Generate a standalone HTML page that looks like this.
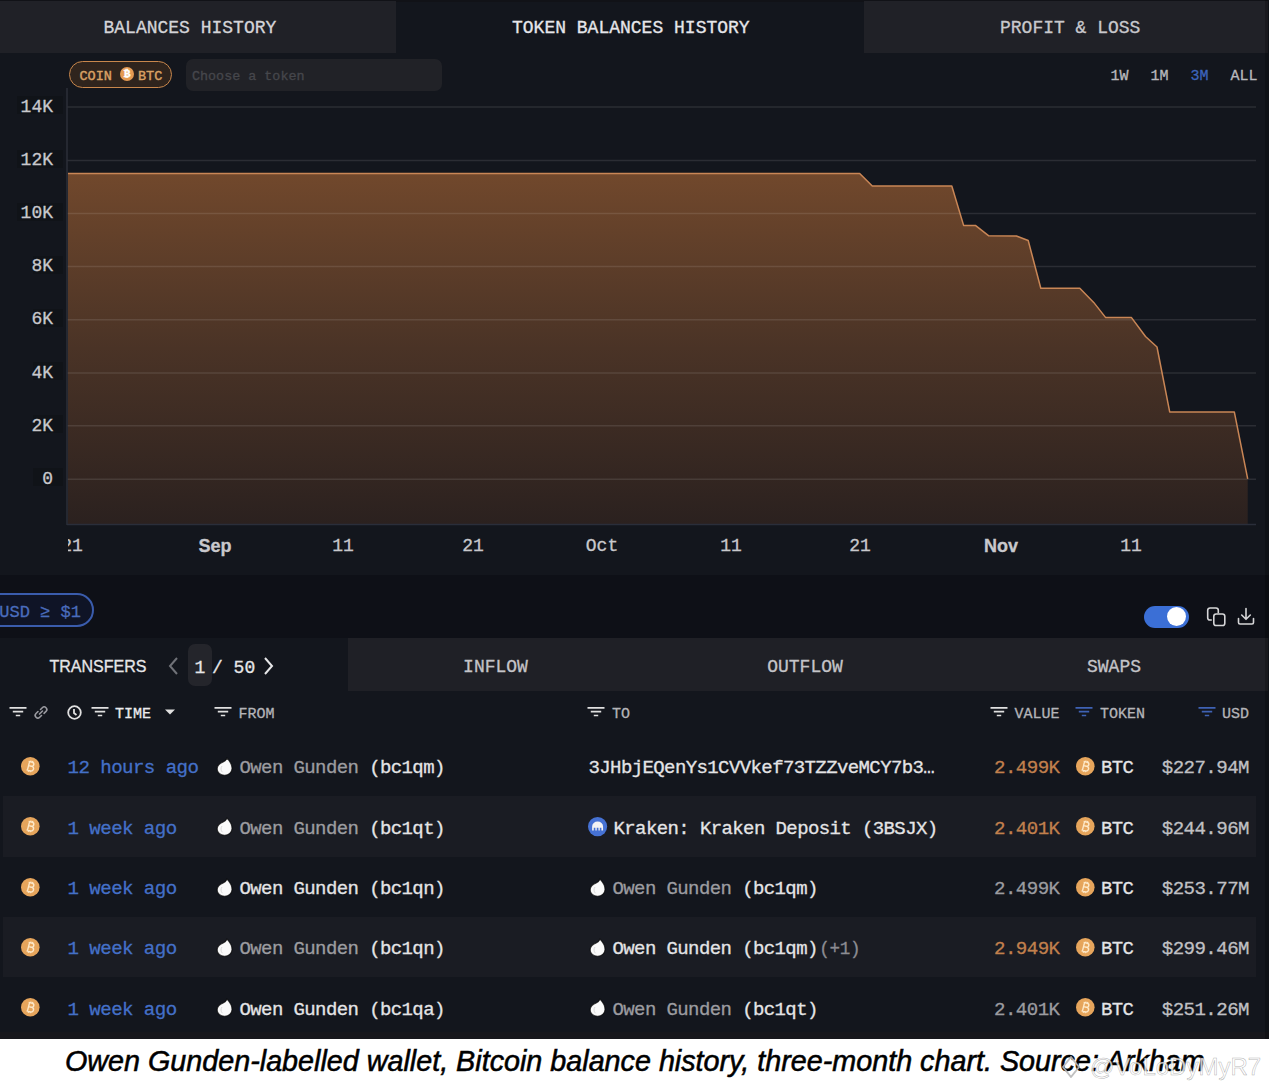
<!DOCTYPE html>
<html><head><meta charset="utf-8">
<style>
*{margin:0;padding:0;box-sizing:border-box}
html,body{width:1270px;height:1092px;overflow:hidden;background:#fff}
body{position:relative;font-family:"Liberation Mono",monospace}
.a{position:absolute;white-space:nowrap}
#ui{position:absolute;left:0;top:0;width:1269px;height:1039px;background:#13161d;overflow:hidden}
.m{font-family:"Liberation Mono",monospace;-webkit-text-stroke:0.3px currentColor}
.s{-webkit-text-stroke:0.3px currentColor}
.s{font-family:"Liberation Sans",sans-serif}
.t18{font-size:18px;line-height:20px}
.r18{font-size:18.1px;line-height:20px}
.q18{font-size:19px;letter-spacing:-0.6px;line-height:20px}
.q18b{font-size:19.1px;letter-spacing:-0.55px;line-height:20px}
.t15{font-size:15px;line-height:17px}
svg{position:absolute;overflow:visible}
</style></head><body>
<div id="ui">

<div class="a" style="left:0;top:0;width:1268px;height:2px;background:#111217"></div>
<div class="a" style="left:0;top:1px;width:396px;height:52px;background:#202127"></div>
<div class="a" style="left:864px;top:1px;width:404px;height:52px;background:#202127"></div>
<div class="a m t18" style="left:103.5px;top:18px;color:#d4d4d8">BALANCES HISTORY</div>
<div class="a m t18" style="left:512px;top:18px;color:#e6e6ea">TOKEN BALANCES HISTORY</div>
<div class="a m t18" style="left:1000px;top:18px;color:#c8c8cc">PROFIT &amp; LOSS</div>
<div class="a" style="left:69px;top:61px;width:103px;height:27px;border:1.6px solid #c8874c;border-radius:14px;background:#2f241d"></div>
<div class="a m" style="left:79.5px;top:68.5px;font-size:13.5px;line-height:16px;color:#d9a064;-webkit-text-stroke:0.45px #d9a064">COIN</div>
<div class="a" style="left:120px;top:67px;width:14px;height:14px;border-radius:7px;background:#e49a52"></div>
<div class="a m" style="left:122px;top:67px;font-size:11px;line-height:14px;color:#fff;font-weight:bold;width:10px;text-align:center">&#x20BF;</div>
<div class="a m" style="left:138px;top:68.5px;font-size:13.5px;line-height:16px;color:#d9a064;-webkit-text-stroke:0.45px #d9a064">BTC</div>
<div class="a" style="left:186px;top:59px;width:256px;height:31.5px;border-radius:7px;background:#212227"></div>
<div class="a m" style="left:192px;top:68.5px;font-size:13.4px;line-height:15px;color:#46474c">Choose a token</div>
<div class="a m" style="left:1110.5px;top:67.5px;font-size:15px;line-height:17px;color:#b8b8bc">1W</div>
<div class="a m" style="left:1150.5px;top:67.5px;font-size:15px;line-height:17px;color:#b8b8bc">1M</div>
<div class="a m" style="left:1190.5px;top:67.5px;font-size:15px;line-height:17px;color:#3d64bc">3M</div>
<div class="a m" style="left:1230.5px;top:67.5px;font-size:15px;line-height:17px;color:#b8b8bc">ALL</div>
<svg style="left:0;top:0" width="1268" height="574" viewBox="0 0 1268 574">
<defs><linearGradient id="g" x1="0" y1="173" x2="0" y2="524" gradientUnits="userSpaceOnUse">
<stop offset="0" stop-color="#71482c"/><stop offset="0.5" stop-color="#4a3326"/><stop offset="1" stop-color="#2b211f"/></linearGradient></defs>
<path d="M68,173.5 L859.7,173.5 L872.3,186 L951.8,186 L963.6,225.4 L975.4,225.4 L988.8,235.8 L1016.4,236 L1028.2,240.5 L1040.8,288.2 L1079.8,288.2 L1093.7,302.4 L1105.7,317.6 L1131.5,317.6 L1145.5,336.5 L1157,347 L1169.7,411.9 L1234.3,411.9 L1247.7,478.9 L1247.7,524 L68,524 Z" fill="url(#g)"/>
<line x1="67" y1="107" x2="1256" y2="107" stroke="#ffffff" stroke-opacity="0.1" stroke-width="1.5"/><line x1="67" y1="160.5" x2="1256" y2="160.5" stroke="#ffffff" stroke-opacity="0.1" stroke-width="1.5"/><line x1="67" y1="213.5" x2="1256" y2="213.5" stroke="#ffffff" stroke-opacity="0.1" stroke-width="1.5"/><line x1="67" y1="266.5" x2="1256" y2="266.5" stroke="#ffffff" stroke-opacity="0.1" stroke-width="1.5"/><line x1="67" y1="319.7" x2="1256" y2="319.7" stroke="#ffffff" stroke-opacity="0.1" stroke-width="1.5"/><line x1="67" y1="373" x2="1256" y2="373" stroke="#ffffff" stroke-opacity="0.1" stroke-width="1.5"/><line x1="67" y1="425.8" x2="1256" y2="425.8" stroke="#ffffff" stroke-opacity="0.1" stroke-width="1.5"/><line x1="67" y1="479.3" x2="1256" y2="479.3" stroke="#ffffff" stroke-opacity="0.1" stroke-width="1.5"/><line x1="67" y1="88" x2="67" y2="525" stroke="#2c2f38" stroke-width="1.5"/><line x1="67" y1="524.5" x2="1256" y2="524.5" stroke="#2a2e3a" stroke-width="1.5"/><path d="M68,173.5 L859.7,173.5 L872.3,186 L951.8,186 L963.6,225.4 L975.4,225.4 L988.8,235.8 L1016.4,236 L1028.2,240.5 L1040.8,288.2 L1079.8,288.2 L1093.7,302.4 L1105.7,317.6 L1131.5,317.6 L1145.5,336.5 L1157,347 L1169.7,411.9 L1234.3,411.9 L1247.7,478.9" fill="none" stroke="#c98656" stroke-width="1.5" stroke-linejoin="round"/></svg>
<div class="a" style="left:16.5px;top:96px;width:46.5px;height:18px;background:#101318"></div>
<div class="a m t18" style="right:1216px;top:96.7px;color:#c8c8cc;text-align:right">14K</div>
<div class="a" style="left:16.5px;top:149.5px;width:46.5px;height:18px;background:#101318"></div>
<div class="a m t18" style="right:1216px;top:150.2px;color:#c8c8cc;text-align:right">12K</div>
<div class="a" style="left:16.5px;top:202.5px;width:46.5px;height:18px;background:#101318"></div>
<div class="a m t18" style="right:1216px;top:203.2px;color:#c8c8cc;text-align:right">10K</div>
<div class="a" style="left:33px;top:255.5px;width:30px;height:18px;background:#101318"></div>
<div class="a m t18" style="right:1216px;top:256.2px;color:#c8c8cc;text-align:right">8K</div>
<div class="a" style="left:33px;top:308.7px;width:30px;height:18px;background:#101318"></div>
<div class="a m t18" style="right:1216px;top:309.4px;color:#c8c8cc;text-align:right">6K</div>
<div class="a" style="left:33px;top:362px;width:30px;height:18px;background:#101318"></div>
<div class="a m t18" style="right:1216px;top:362.7px;color:#c8c8cc;text-align:right">4K</div>
<div class="a" style="left:33px;top:414.8px;width:30px;height:18px;background:#101318"></div>
<div class="a m t18" style="right:1216px;top:415.5px;color:#c8c8cc;text-align:right">2K</div>
<div class="a" style="left:33px;top:468.3px;width:30px;height:18px;background:#101318"></div>
<div class="a m t18" style="right:1216px;top:469.0px;color:#c8c8cc;text-align:right">0</div>
<div class="a" style="left:68px;top:525px;width:1200px;height:45px;overflow:hidden">
<div class="a m" style="left:-36px;width:80px;text-align:center;top:10.799999999999955px;font-size:18px;line-height:20px;font-weight:normal;color:#c8c8cc">21</div>
<div class="a s" style="left:107px;width:80px;text-align:center;top:10.799999999999955px;font-size:18px;line-height:20px;font-weight:bold;color:#c8c8cc">Sep</div>
<div class="a m" style="left:235px;width:80px;text-align:center;top:10.799999999999955px;font-size:18px;line-height:20px;font-weight:normal;color:#c8c8cc">11</div>
<div class="a m" style="left:365px;width:80px;text-align:center;top:10.799999999999955px;font-size:18px;line-height:20px;font-weight:normal;color:#c8c8cc">21</div>
<div class="a m" style="left:494px;width:80px;text-align:center;top:10.799999999999955px;font-size:18px;line-height:20px;font-weight:normal;color:#c8c8cc">Oct</div>
<div class="a m" style="left:623px;width:80px;text-align:center;top:10.799999999999955px;font-size:18px;line-height:20px;font-weight:normal;color:#c8c8cc">11</div>
<div class="a m" style="left:752px;width:80px;text-align:center;top:10.799999999999955px;font-size:18px;line-height:20px;font-weight:normal;color:#c8c8cc">21</div>
<div class="a s" style="left:893px;width:80px;text-align:center;top:10.799999999999955px;font-size:18px;line-height:20px;font-weight:bold;color:#c8c8cc">Nov</div>
<div class="a m" style="left:1023px;width:80px;text-align:center;top:10.799999999999955px;font-size:18px;line-height:20px;font-weight:normal;color:#c8c8cc">11</div>
</div>
<div class="a" style="left:0;top:575px;width:1269px;height:63px;background:#0e1017"></div>
<div class="a" style="left:-30px;top:593px;width:124px;height:34px;border:2px solid #3a5cac;border-radius:17px;background:#0f1426"></div>
<div class="a m" style="left:-0.7px;top:603px;font-size:17px;line-height:19px;color:#4a6cbc;-webkit-text-stroke:0.3px #4a6cbc">USD &#x2265; $1</div>
<div class="a" style="left:1144px;top:605.5px;width:44.5px;height:22px;border-radius:11px;background:#3b6fd6"></div>
<div class="a" style="left:1166.5px;top:607px;width:19px;height:19px;border-radius:10px;background:#fff"></div>
<svg style="left:1206px;top:607px" width="22" height="21" viewBox="0 0 22 21">
<path d="M5.8 13 H4 a2.3 2.3 0 0 1 -2.3 -2.3 V3.3 a2.3 2.3 0 0 1 2.3 -2.3 H10 a2.3 2.3 0 0 1 2.3 2.3 V6.2" fill="none" stroke="#d6d6d8" stroke-width="1.6"/>
<rect x="7.8" y="7" width="11" height="11.5" rx="2.3" fill="none" stroke="#d6d6d8" stroke-width="1.6"/></svg>
<svg style="left:1236px;top:607px" width="20" height="19" viewBox="0 0 20 19">
<path d="M10 1.5 V12 M5.7 8 L10 12.3 L14.3 8" fill="none" stroke="#d6d6d8" stroke-width="1.6" stroke-linecap="round" stroke-linejoin="round"/>
<path d="M2.5 11.5 V15.5 a1.5 1.5 0 0 0 1.5 1.5 H16 a1.5 1.5 0 0 0 1.5 -1.5 V11.5" fill="none" stroke="#d6d6d8" stroke-width="1.6" stroke-linecap="round"/></svg>
<div class="a" style="left:0;top:638px;width:348px;height:53px;background:#13161d"></div>
<div class="a" style="left:348px;top:638px;width:920px;height:53px;background:#1f2026"></div>
<div class="a s" style="left:49.5px;top:658.4px;font-size:16px;line-height:18px;color:#e6e6e8">TRANSFERS</div>
<svg style="left:166px;top:656px" width="14" height="20" viewBox="0 0 14 20"><path d="M11 2 L4 10 L11 18" fill="none" stroke="#707278" stroke-width="2"/></svg>
<div class="a" style="left:187.5px;top:644px;width:24.5px;height:42px;border-radius:7px;background:#24252b"></div>
<div class="a m t18" style="left:194.5px;top:657.8px;color:#e6e6e8">1</div>
<div class="a m t18" style="left:212px;top:657.8px;color:#e6e6e8">/ 50</div>
<svg style="left:261px;top:656px" width="14" height="20" viewBox="0 0 14 20"><path d="M4 2 L11 10 L4 18" fill="none" stroke="#e6e6e8" stroke-width="2"/></svg>
<div class="a m t18" style="left:435.5px;width:120px;text-align:center;top:656.8px;color:#c4c4c8">INFLOW</div>
<div class="a m t18" style="left:745px;width:120px;text-align:center;top:656.8px;color:#c4c4c8">OUTFLOW</div>
<div class="a m t18" style="left:1054px;width:120px;text-align:center;top:656.8px;color:#c4c4c8">SWAPS</div>
<svg style="left:9px;top:707px" width="18" height="10" viewBox="0 0 18 10"><path d="M0.5 0.9 H17.5 M3.8 4.6 H14.2 M6.8 8.5 H11.2" stroke="#e0e0e0" stroke-width="1.7"/></svg>
<svg style="left:33px;top:705px" width="16" height="15" viewBox="0 0 16 15"><path d="M6.5 9 L9.5 6 M5 6.5 L3 8.5 a2.6 2.6 0 0 0 3.7 3.7 L8.5 10.5 M7.5 4.5 L9.3 2.7 a2.6 2.6 0 0 1 3.7 3.7 L11 8.3" fill="none" stroke="#9a9aa0" stroke-width="1.6" stroke-linecap="round"/></svg>
<svg style="left:67px;top:704.5px" width="16" height="15" viewBox="0 0 16 15"><circle cx="7.5" cy="7.5" r="6.3" fill="none" stroke="#e0e0e0" stroke-width="1.8"/><path d="M7 4 V8 L9.5 10" fill="none" stroke="#e0e0e0" stroke-width="1.8"/></svg>
<svg style="left:91px;top:707px" width="18" height="10" viewBox="0 0 18 10"><path d="M0.5 0.9 H17.5 M3.8 4.6 H14.2 M6.8 8.5 H11.2" stroke="#e0e0e0" stroke-width="1.7"/></svg>
<div class="a m t15" style="left:115px;top:706px;color:#ececee">TIME</div>
<svg style="left:164px;top:709px" width="12" height="6" viewBox="0 0 12 6"><path d="M1 0.5 H11 L6 5.5 Z" fill="#e0e0e0"/></svg>
<svg style="left:214px;top:707px" width="18" height="10" viewBox="0 0 18 10"><path d="M0.5 0.9 H17.5 M3.8 4.6 H14.2 M6.8 8.5 H11.2" stroke="#e0e0e0" stroke-width="1.7"/></svg>
<div class="a m t15" style="left:238.5px;top:706px;color:#b4b4b8">FROM</div>
<svg style="left:587px;top:707px" width="18" height="10" viewBox="0 0 18 10"><path d="M0.5 0.9 H17.5 M3.8 4.6 H14.2 M6.8 8.5 H11.2" stroke="#e0e0e0" stroke-width="1.7"/></svg>
<div class="a m t15" style="left:612px;top:706px;color:#b4b4b8">TO</div>
<svg style="left:990px;top:707px" width="18" height="10" viewBox="0 0 18 10"><path d="M0.5 0.9 H17.5 M3.8 4.6 H14.2 M6.8 8.5 H11.2" stroke="#e0e0e0" stroke-width="1.7"/></svg>
<div class="a m t15" style="left:1014.5px;top:706px;color:#b4b4b8">VALUE</div>
<svg style="left:1075px;top:707px" width="18" height="10" viewBox="0 0 18 10"><path d="M0.5 0.9 H17.5 M3.8 4.6 H14.2 M6.8 8.5 H11.2" stroke="#3f62b4" stroke-width="1.7"/></svg>
<div class="a m t15" style="left:1100px;top:706px;color:#b4b4b8">TOKEN</div>
<svg style="left:1198px;top:707px" width="18" height="10" viewBox="0 0 18 10"><path d="M0.5 0.9 H17.5 M3.8 4.6 H14.2 M6.8 8.5 H11.2" stroke="#3f62b4" stroke-width="1.7"/></svg>
<div class="a m t15" style="left:1222px;top:706px;color:#b4b4b8">USD</div>
<svg style="left:21.3px;top:756.5999999999999px" width="18.6" height="18.6" viewBox="0 0 20 20"><circle cx="10" cy="10" r="10" fill="#e6a55c"/><g transform="rotate(14 10 10)" fill="none" stroke="#fde8c8" stroke-width="1.5"><path d="M8 5 V15 M9.3 3.8 V5.2 M11.3 3.8 V5.2 M9.3 14.8 V16.2 M11.3 14.8 V16.2 M7 5.3 H11 a2.2 2.2 0 0 1 0 4.4 H8 M8 9.7 H11.6 a2.5 2.5 0 0 1 0 5 H7"/></g></svg>
<div class="a m q18b" style="left:67.5px;top:758.0999999999999px;color:#4470c8">12 hours ago</div>
<svg style="left:216.2px;top:756.4999999999999px" width="17" height="19" viewBox="0 0 17 19"><path d="M11 1.2 C13.8 4.2 16.2 7.5 16 11.6 C15.8 15.6 12.6 18.2 8.6 18.2 C4.4 18.2 1.2 15.6 1.2 12 C1.2 8.4 4.2 6.2 7.2 5 C9 4.2 10.4 3 11 1.2 Z" fill="#fafafa" stroke="#000" stroke-width="1.1" stroke-opacity="0.7"/><path d="M6 9 C4.6 10.8 4.6 13.4 6.4 15.2" fill="none" stroke="#c8c8c8" stroke-width="0.7"/></svg>
<div class="a m q18" style="left:239.5px;top:758.0999999999999px;color:#9c9ca0">Owen Gunden <span style="color:#e4e4e6">(bc1qm)</span></div>
<div class="a m q18" style="left:588.5px;top:758.0999999999999px;color:#e4e4e6">3JHbjEQenYs1CVVkef73TZZveMCY7b3…</div>
<div class="a m q18b" style="right:209.5px;top:758.0999999999999px;color:#c2804d">2.499K</div>
<svg style="left:1075.7px;top:756.5999999999999px" width="18.6" height="18.6" viewBox="0 0 20 20"><circle cx="10" cy="10" r="10" fill="#e6a55c"/><g transform="rotate(14 10 10)" fill="none" stroke="#fde8c8" stroke-width="1.5"><path d="M8 5 V15 M9.3 3.8 V5.2 M11.3 3.8 V5.2 M9.3 14.8 V16.2 M11.3 14.8 V16.2 M7 5.3 H11 a2.2 2.2 0 0 1 0 4.4 H8 M8 9.7 H11.6 a2.5 2.5 0 0 1 0 5 H7"/></g></svg>
<div class="a m q18" style="left:1101px;top:758.0999999999999px;color:#e4e4e6">BTC</div>
<div class="a m q18b" style="right:20px;top:758.0999999999999px;color:#c0c0c4">$227.94M</div>
<div class="a" style="left:3px;top:796.4px;width:1253px;height:60.9px;background:#1a1c23"></div>
<svg style="left:21.3px;top:817.35px" width="18.6" height="18.6" viewBox="0 0 20 20"><circle cx="10" cy="10" r="10" fill="#e6a55c"/><g transform="rotate(14 10 10)" fill="none" stroke="#fde8c8" stroke-width="1.5"><path d="M8 5 V15 M9.3 3.8 V5.2 M11.3 3.8 V5.2 M9.3 14.8 V16.2 M11.3 14.8 V16.2 M7 5.3 H11 a2.2 2.2 0 0 1 0 4.4 H8 M8 9.7 H11.6 a2.5 2.5 0 0 1 0 5 H7"/></g></svg>
<div class="a m q18b" style="left:67.5px;top:818.85px;color:#4470c8">1 week ago</div>
<svg style="left:216.2px;top:817.25px" width="17" height="19" viewBox="0 0 17 19"><path d="M11 1.2 C13.8 4.2 16.2 7.5 16 11.6 C15.8 15.6 12.6 18.2 8.6 18.2 C4.4 18.2 1.2 15.6 1.2 12 C1.2 8.4 4.2 6.2 7.2 5 C9 4.2 10.4 3 11 1.2 Z" fill="#fafafa" stroke="#000" stroke-width="1.1" stroke-opacity="0.7"/><path d="M6 9 C4.6 10.8 4.6 13.4 6.4 15.2" fill="none" stroke="#c8c8c8" stroke-width="0.7"/></svg>
<div class="a m q18" style="left:239.5px;top:818.85px;color:#9c9ca0">Owen Gunden <span style="color:#e4e4e6">(bc1qt)</span></div>
<svg style="left:587.9px;top:817.25px" width="19.2" height="19.2" viewBox="0 0 20 20"><circle cx="10" cy="10" r="10" fill="#4672d4"/><path d="M4.3 14.2 V10 a5.7 5.2 0 0 1 11.4 0 V14.2 H14 V11.2 H12.3 V14.2 H10.9 V11.2 H9.1 V14.2 H7.7 V11.2 H6 V14.2 Z" fill="#f4f4f4"/></svg>
<div class="a m q18" style="left:613.5px;top:818.85px;color:#e4e4e6">Kraken: Kraken Deposit (3BSJX)</div>
<div class="a m q18b" style="right:209.5px;top:818.85px;color:#c2804d">2.401K</div>
<svg style="left:1075.7px;top:817.35px" width="18.6" height="18.6" viewBox="0 0 20 20"><circle cx="10" cy="10" r="10" fill="#e6a55c"/><g transform="rotate(14 10 10)" fill="none" stroke="#fde8c8" stroke-width="1.5"><path d="M8 5 V15 M9.3 3.8 V5.2 M11.3 3.8 V5.2 M9.3 14.8 V16.2 M11.3 14.8 V16.2 M7 5.3 H11 a2.2 2.2 0 0 1 0 4.4 H8 M8 9.7 H11.6 a2.5 2.5 0 0 1 0 5 H7"/></g></svg>
<div class="a m q18" style="left:1101px;top:818.85px;color:#e4e4e6">BTC</div>
<div class="a m q18b" style="right:20px;top:818.85px;color:#c0c0c4">$244.96M</div>
<svg style="left:21.3px;top:877.8px" width="18.6" height="18.6" viewBox="0 0 20 20"><circle cx="10" cy="10" r="10" fill="#e6a55c"/><g transform="rotate(14 10 10)" fill="none" stroke="#fde8c8" stroke-width="1.5"><path d="M8 5 V15 M9.3 3.8 V5.2 M11.3 3.8 V5.2 M9.3 14.8 V16.2 M11.3 14.8 V16.2 M7 5.3 H11 a2.2 2.2 0 0 1 0 4.4 H8 M8 9.7 H11.6 a2.5 2.5 0 0 1 0 5 H7"/></g></svg>
<div class="a m q18b" style="left:67.5px;top:879.3px;color:#4470c8">1 week ago</div>
<svg style="left:216.2px;top:877.6999999999999px" width="17" height="19" viewBox="0 0 17 19"><path d="M11 1.2 C13.8 4.2 16.2 7.5 16 11.6 C15.8 15.6 12.6 18.2 8.6 18.2 C4.4 18.2 1.2 15.6 1.2 12 C1.2 8.4 4.2 6.2 7.2 5 C9 4.2 10.4 3 11 1.2 Z" fill="#fafafa" stroke="#000" stroke-width="1.1" stroke-opacity="0.7"/><path d="M6 9 C4.6 10.8 4.6 13.4 6.4 15.2" fill="none" stroke="#c8c8c8" stroke-width="0.7"/></svg>
<div class="a m q18" style="left:239.5px;top:879.3px;color:#e4e4e6">Owen Gunden <span style="color:#e4e4e6">(bc1qn)</span></div>
<svg style="left:589.2px;top:877.6999999999999px" width="17" height="19" viewBox="0 0 17 19"><path d="M11 1.2 C13.8 4.2 16.2 7.5 16 11.6 C15.8 15.6 12.6 18.2 8.6 18.2 C4.4 18.2 1.2 15.6 1.2 12 C1.2 8.4 4.2 6.2 7.2 5 C9 4.2 10.4 3 11 1.2 Z" fill="#fafafa" stroke="#000" stroke-width="1.1" stroke-opacity="0.7"/><path d="M6 9 C4.6 10.8 4.6 13.4 6.4 15.2" fill="none" stroke="#c8c8c8" stroke-width="0.7"/></svg>
<div class="a m q18" style="left:612.5px;top:879.3px;color:#9c9ca0">Owen Gunden <span style="color:#e4e4e6">(bc1qm)</span></div>
<div class="a m q18b" style="right:209.5px;top:879.3px;color:#9c9ca0">2.499K</div>
<svg style="left:1075.7px;top:877.8px" width="18.6" height="18.6" viewBox="0 0 20 20"><circle cx="10" cy="10" r="10" fill="#e6a55c"/><g transform="rotate(14 10 10)" fill="none" stroke="#fde8c8" stroke-width="1.5"><path d="M8 5 V15 M9.3 3.8 V5.2 M11.3 3.8 V5.2 M9.3 14.8 V16.2 M11.3 14.8 V16.2 M7 5.3 H11 a2.2 2.2 0 0 1 0 4.4 H8 M8 9.7 H11.6 a2.5 2.5 0 0 1 0 5 H7"/></g></svg>
<div class="a m q18" style="left:1101px;top:879.3px;color:#e4e4e6">BTC</div>
<div class="a m q18b" style="right:20px;top:879.3px;color:#c0c0c4">$253.77M</div>
<div class="a" style="left:3px;top:917.3px;width:1253px;height:60px;background:#1a1c23"></div>
<svg style="left:21.3px;top:937.8px" width="18.6" height="18.6" viewBox="0 0 20 20"><circle cx="10" cy="10" r="10" fill="#e6a55c"/><g transform="rotate(14 10 10)" fill="none" stroke="#fde8c8" stroke-width="1.5"><path d="M8 5 V15 M9.3 3.8 V5.2 M11.3 3.8 V5.2 M9.3 14.8 V16.2 M11.3 14.8 V16.2 M7 5.3 H11 a2.2 2.2 0 0 1 0 4.4 H8 M8 9.7 H11.6 a2.5 2.5 0 0 1 0 5 H7"/></g></svg>
<div class="a m q18b" style="left:67.5px;top:939.3px;color:#4470c8">1 week ago</div>
<svg style="left:216.2px;top:937.6999999999999px" width="17" height="19" viewBox="0 0 17 19"><path d="M11 1.2 C13.8 4.2 16.2 7.5 16 11.6 C15.8 15.6 12.6 18.2 8.6 18.2 C4.4 18.2 1.2 15.6 1.2 12 C1.2 8.4 4.2 6.2 7.2 5 C9 4.2 10.4 3 11 1.2 Z" fill="#fafafa" stroke="#000" stroke-width="1.1" stroke-opacity="0.7"/><path d="M6 9 C4.6 10.8 4.6 13.4 6.4 15.2" fill="none" stroke="#c8c8c8" stroke-width="0.7"/></svg>
<div class="a m q18" style="left:239.5px;top:939.3px;color:#9c9ca0">Owen Gunden <span style="color:#e4e4e6">(bc1qn)</span></div>
<svg style="left:589.2px;top:937.6999999999999px" width="17" height="19" viewBox="0 0 17 19"><path d="M11 1.2 C13.8 4.2 16.2 7.5 16 11.6 C15.8 15.6 12.6 18.2 8.6 18.2 C4.4 18.2 1.2 15.6 1.2 12 C1.2 8.4 4.2 6.2 7.2 5 C9 4.2 10.4 3 11 1.2 Z" fill="#fafafa" stroke="#000" stroke-width="1.1" stroke-opacity="0.7"/><path d="M6 9 C4.6 10.8 4.6 13.4 6.4 15.2" fill="none" stroke="#c8c8c8" stroke-width="0.7"/></svg>
<div class="a m q18" style="left:612.5px;top:939.3px;color:#e4e4e6">Owen Gunden <span style="color:#e4e4e6">(bc1qm)</span><span style="color:#8c8c92;font-size:17.6px;margin-left:1.5px;letter-spacing:-0.3px">(+1)</span></div>
<div class="a m q18b" style="right:209.5px;top:939.3px;color:#c2804d">2.949K</div>
<svg style="left:1075.7px;top:937.8px" width="18.6" height="18.6" viewBox="0 0 20 20"><circle cx="10" cy="10" r="10" fill="#e6a55c"/><g transform="rotate(14 10 10)" fill="none" stroke="#fde8c8" stroke-width="1.5"><path d="M8 5 V15 M9.3 3.8 V5.2 M11.3 3.8 V5.2 M9.3 14.8 V16.2 M11.3 14.8 V16.2 M7 5.3 H11 a2.2 2.2 0 0 1 0 4.4 H8 M8 9.7 H11.6 a2.5 2.5 0 0 1 0 5 H7"/></g></svg>
<div class="a m q18" style="left:1101px;top:939.3px;color:#e4e4e6">BTC</div>
<div class="a m q18b" style="right:20px;top:939.3px;color:#c0c0c4">$299.46M</div>
<svg style="left:21.3px;top:998.4px" width="18.6" height="18.6" viewBox="0 0 20 20"><circle cx="10" cy="10" r="10" fill="#e6a55c"/><g transform="rotate(14 10 10)" fill="none" stroke="#fde8c8" stroke-width="1.5"><path d="M8 5 V15 M9.3 3.8 V5.2 M11.3 3.8 V5.2 M9.3 14.8 V16.2 M11.3 14.8 V16.2 M7 5.3 H11 a2.2 2.2 0 0 1 0 4.4 H8 M8 9.7 H11.6 a2.5 2.5 0 0 1 0 5 H7"/></g></svg>
<div class="a m q18b" style="left:67.5px;top:999.9px;color:#4470c8">1 week ago</div>
<svg style="left:216.2px;top:998.3px" width="17" height="19" viewBox="0 0 17 19"><path d="M11 1.2 C13.8 4.2 16.2 7.5 16 11.6 C15.8 15.6 12.6 18.2 8.6 18.2 C4.4 18.2 1.2 15.6 1.2 12 C1.2 8.4 4.2 6.2 7.2 5 C9 4.2 10.4 3 11 1.2 Z" fill="#fafafa" stroke="#000" stroke-width="1.1" stroke-opacity="0.7"/><path d="M6 9 C4.6 10.8 4.6 13.4 6.4 15.2" fill="none" stroke="#c8c8c8" stroke-width="0.7"/></svg>
<div class="a m q18" style="left:239.5px;top:999.9px;color:#e4e4e6">Owen Gunden <span style="color:#e4e4e6">(bc1qa)</span></div>
<svg style="left:589.2px;top:998.3px" width="17" height="19" viewBox="0 0 17 19"><path d="M11 1.2 C13.8 4.2 16.2 7.5 16 11.6 C15.8 15.6 12.6 18.2 8.6 18.2 C4.4 18.2 1.2 15.6 1.2 12 C1.2 8.4 4.2 6.2 7.2 5 C9 4.2 10.4 3 11 1.2 Z" fill="#fafafa" stroke="#000" stroke-width="1.1" stroke-opacity="0.7"/><path d="M6 9 C4.6 10.8 4.6 13.4 6.4 15.2" fill="none" stroke="#c8c8c8" stroke-width="0.7"/></svg>
<div class="a m q18" style="left:612.5px;top:999.9px;color:#9c9ca0">Owen Gunden <span style="color:#e4e4e6">(bc1qt)</span></div>
<div class="a m q18b" style="right:209.5px;top:999.9px;color:#9c9ca0">2.401K</div>
<svg style="left:1075.7px;top:998.4px" width="18.6" height="18.6" viewBox="0 0 20 20"><circle cx="10" cy="10" r="10" fill="#e6a55c"/><g transform="rotate(14 10 10)" fill="none" stroke="#fde8c8" stroke-width="1.5"><path d="M8 5 V15 M9.3 3.8 V5.2 M11.3 3.8 V5.2 M9.3 14.8 V16.2 M11.3 14.8 V16.2 M7 5.3 H11 a2.2 2.2 0 0 1 0 4.4 H8 M8 9.7 H11.6 a2.5 2.5 0 0 1 0 5 H7"/></g></svg>
<div class="a m q18" style="left:1101px;top:999.9px;color:#e4e4e6">BTC</div>
<div class="a m q18b" style="right:20px;top:999.9px;color:#c0c0c4">$251.26M</div>
<div class="a" style="left:0;top:1032px;width:1269px;height:7px;background:#17171c"></div>
<div class="a" style="left:1265px;top:0;width:4px;height:1039px;background:rgba(0,0,0,0.22)"></div>
</div>
<div class="a s" style="left:65px;top:1044px;font-size:28.72px;line-height:34px;font-style:italic;color:#000;-webkit-text-stroke:0.55px #000">Owen Gunden-labelled wallet, Bitcoin balance history, three-month chart. Source: Arkham</div>
<svg style="left:1061px;top:1055px" width="20" height="27" viewBox="0 0 20 27"><path d="M10 2 L18 12 L10 22 L2 12 Z" fill="none" stroke="#b8b8b8" stroke-opacity="0.9" stroke-width="2" stroke-linejoin="round"/></svg>
<div class="a s" style="left:1090px;top:1054px;font-size:24px;line-height:26px;color:rgba(255,255,255,0.8);-webkit-text-stroke:0.5px rgba(110,110,110,0.55)">@VoLoDyMyR7</div>
</body></html>
